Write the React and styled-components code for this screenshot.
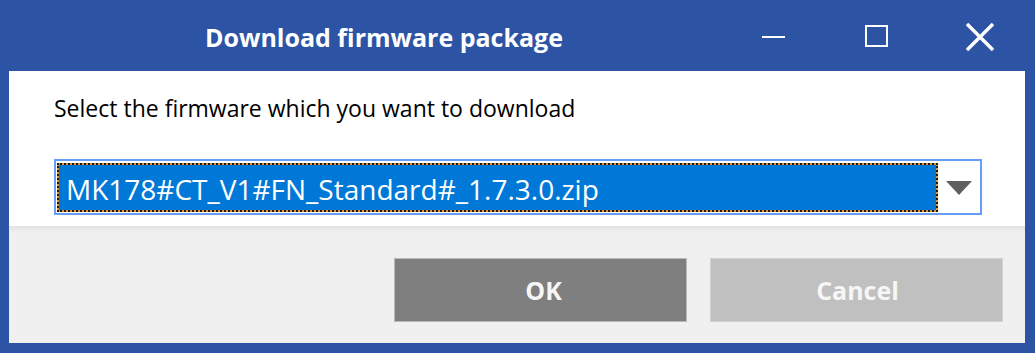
import React from "react";
import styled, { createGlobalStyle } from "styled-components";

const Global = createGlobalStyle`
  html, body { margin: 0; padding: 0; }
  body { background: #2d54a4; font-family: "Open Sans", "Noto Sans", sans-serif; }
`;

const Window = styled.div`
  width: 1035px;
  height: 353px;
  background: #2d54a4;
  display: flex;
  flex-direction: column;
  box-sizing: border-box;
  padding: 0 10px 10px 9px;
`;

const TitleBar = styled.div`
  height: 71px;
  display: flex;
  align-items: center;
  margin: 0 -10px 0 -9px;
`;

const Title = styled.div`
  flex: 1;
  text-align: center;
  padding: 3px 0 0 46px;
  color: #ffffff;
  font-weight: 700;
  font-size: 25px;
`;

const Controls = styled.div`
  display: flex;
  height: 100%;
  padding-right: 4px;
`;

const CtlButton = styled.div`
  width: 103px;
  height: 100%;
  display: flex;
  align-items: center;
  justify-content: center;
  padding-top: 2px;
  box-sizing: border-box;
`;

const Client = styled.div`
  flex: 1;
  display: flex;
  flex-direction: column;
  background: #ffffff;
`;

const Body = styled.div`
  height: 155px;
  box-sizing: border-box;
  padding: 22px 43px 0 45px;
  display: flex;
  flex-direction: column;
`;

const Label = styled.div`
  font-size: 23px;
  line-height: 31px;
  color: #000;
`;

const Combo = styled.div`
  margin-top: 35px;
  height: 56px;
  box-sizing: border-box;
  border: 2px solid #669df5;
  padding: 2px 0 1px 1px;
  display: flex;
  background: #fff;
`;

const Selection = styled.div`
  width: 881px;
  box-sizing: border-box;
  border: 2px dotted #1a1a1a;
  background: linear-gradient(#0078d7, #0078d7) padding-box, #e8942c border-box;
  color: #ffffff;
  font-size: 28px;
  display: flex;
  align-items: center;
  padding: 2px 0 0 7px;
  white-space: nowrap;
`;

const ArrowCell = styled.div`
  flex: 1;
  display: flex;
  align-items: center;
  justify-content: center;
`;

const Footer = styled.div`
  flex: 1;
  background: linear-gradient(#e2e2e2, #f0f0f0 7px);
  display: flex;
  justify-content: flex-end;
  align-items: flex-start;
  gap: 23px;
  padding: 32px 22px 0 0;
`;

const Button = styled.div`
  width: 293px;
  height: 64px;
  box-sizing: border-box;
  border: 1px solid ${(p) => (p.primary ? "#b8b8b8" : "#d2d2d2")};
  background: ${(p) => (p.primary ? "#7f7f7f" : "#c0c0c0")};
  color: #f6f6f6;
  font-weight: 700;
  font-size: 25px;
  display: flex;
  align-items: center;
  justify-content: center;
  padding-left: ${(p) => (p.primary ? "6px" : "2px")};
`;

export default function App() {
  return (
    <>
      <Global />
      <Window>
        <TitleBar>
          <Title>Download firmware package</Title>
          <Controls>
            <CtlButton>
              <svg width="24" height="24" viewBox="0 0 24 24">
                <rect x="0" y="11" width="23" height="2" fill="#fff" />
              </svg>
            </CtlButton>
            <CtlButton>
              <svg width="24" height="24" viewBox="0 0 24 24">
                <rect x="1" y="1" width="21" height="20" fill="none" stroke="#fff" strokeWidth="2" />
              </svg>
            </CtlButton>
            <CtlButton>
              <svg width="30" height="30" viewBox="0 0 30 30">
                <path d="M2 2 L28 28 M28 2 L2 28" stroke="#fff" strokeWidth="3.4" />
              </svg>
            </CtlButton>
          </Controls>
        </TitleBar>
        <Client>
          <Body>
            <Label>Select the firmware which you want to download</Label>
            <Combo>
              <Selection>MK178#CT_V1#FN_Standard#_1.7.3.0.zip</Selection>
              <ArrowCell>
                <svg width="26" height="14" viewBox="0 0 26 14">
                  <path d="M0 0 H26 L13 14 Z" fill="#606060" />
                </svg>
              </ArrowCell>
            </Combo>
          </Body>
          <Footer>
            <Button primary>OK</Button>
            <Button>Cancel</Button>
          </Footer>
        </Client>
      </Window>
    </>
  );
}
